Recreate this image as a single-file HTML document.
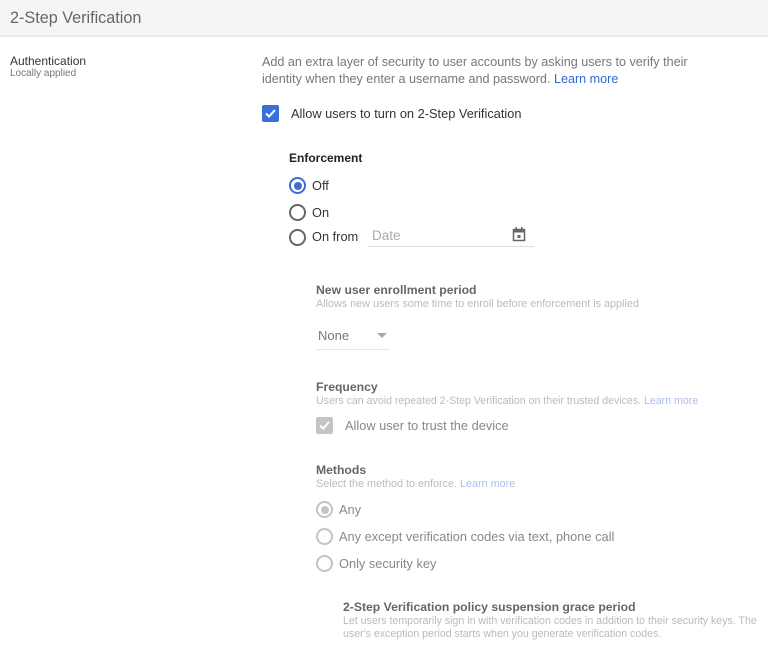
<!DOCTYPE html>
<html><head><meta charset="utf-8"><style>
*{margin:0;padding:0;box-sizing:border-box}
body{width:768px;height:649px;background:#fff;font-family:"Liberation Sans",sans-serif;position:relative;overflow:hidden}
.a{position:absolute;white-space:nowrap}
.hdr{position:absolute;left:0;top:0;width:768px;height:37px;background:#f5f5f5;border-bottom:2px solid #ebebeb}
.rad{position:absolute;width:17px;height:17px;border:2px solid #666;border-radius:50%}
.rad.on{border-color:#3b6fd8}
.rad.on::after{content:"";position:absolute;left:2.5px;top:2.5px;width:8px;height:8px;border-radius:50%;background:#3b6fd8}
.rad.g{border-color:#c4c4c4}
.rad.g.sel::after{content:"";position:absolute;left:2.5px;top:2.5px;width:8px;height:8px;border-radius:50%;background:#c4c4c4}
.b{color:#bbb;font-size:10.8px}
.lk{color:#3367d6}
</style></head><body>
<div class="hdr"></div>
<div class="a" style="left:10px;top:9px;font-size:16.2px;color:#666">2-Step Verification</div>
<div class="a" style="left:10px;top:54px;font-size:12px;color:#333">Authentication</div>
<div class="a" style="left:10px;top:68px;font-size:10px;color:#777">Locally applied</div>
<div class="a" style="left:262px;top:54px;font-size:12.6px;color:#777;line-height:17px">Add an extra layer of security to user accounts by asking users to verify their<br>identity when they enter a username and password. <span class="lk">Learn more</span></div>
<div class="a" style="left:262px;top:105px;width:17px;height:17px;background:#3b6fd8;border-radius:2px">
<svg width="17" height="17" viewBox="0 0 17 17"><path d="M4 8.5l3 3 6-6.5" stroke="#fff" stroke-width="2" fill="none"/></svg></div>
<div class="a" style="left:291px;top:106px;font-size:12.8px;color:#333">Allow users to turn on 2-Step Verification</div>
<div class="a" style="left:289px;top:151px;font-size:12px;font-weight:bold;color:#222">Enforcement</div>
<div class="rad on" style="left:289px;top:177px"></div>
<div class="a" style="left:312px;top:178px;font-size:12.8px;color:#333">Off</div>
<div class="rad" style="left:289px;top:204px"></div>
<div class="a" style="left:312px;top:205px;font-size:12.8px;color:#333">On</div>
<div class="rad" style="left:289px;top:229px"></div>
<div class="a" style="left:312px;top:229px;font-size:12.8px;color:#333">On from</div>
<div class="a" style="left:372px;top:228px;font-size:13.5px;color:#aaa">Date</div>
<div class="a" style="left:368px;top:246px;width:166px;height:1px;background:#ddd"></div>
<svg class="a" style="left:512px;top:227px" width="14" height="15" viewBox="0 0 14 15"><rect x="1.5" y="2.5" width="11" height="11" fill="none" stroke="#666" stroke-width="1.5"/><rect x="1.5" y="2.5" width="11" height="3" fill="#666"/><rect x="3.5" y="0" width="1.5" height="3" fill="#666"/><rect x="9" y="0" width="1.5" height="3" fill="#666"/><rect x="5.5" y="8" width="3" height="3" fill="#666"/></svg>
<div class="a" style="left:316px;top:283px;font-size:12.2px;font-weight:bold;color:#666">New user enrollment period</div>
<div class="a b" style="left:316px;top:298px">Allows new users some time to enroll before enforcement is applied</div>
<div class="a" style="left:318px;top:328px;font-size:13px;color:#777">None</div>
<div class="a" style="left:377px;top:333px;width:0;height:0;border-left:5px solid transparent;border-right:5px solid transparent;border-top:5px solid #aaa"></div>
<div class="a" style="left:316px;top:349px;width:74px;height:1px;background:#e5e5e5"></div>
<div class="a" style="left:316px;top:380px;font-size:12.2px;font-weight:bold;color:#666">Frequency</div>
<div class="a b" style="left:316px;top:395px;font-size:10.6px">Users can avoid repeated 2-Step Verification on their trusted devices. <span style="color:#a9bff0">Learn more</span></div>
<div class="a" style="left:316px;top:417px;width:17px;height:17px;background:#c4c4c4;border-radius:2px">
<svg width="17" height="17" viewBox="0 0 17 17"><path d="M4 8.5l3 3 6-6.5" stroke="#fff" stroke-width="2" fill="none"/></svg></div>
<div class="a" style="left:345px;top:418px;font-size:12.8px;color:#888">Allow user to trust the device</div>
<div class="a" style="left:316px;top:463px;font-size:12.2px;font-weight:bold;color:#666">Methods</div>
<div class="a b" style="left:316px;top:478px">Select the method to enforce. <span style="color:#a9bff0">Learn more</span></div>
<div class="rad g sel" style="left:316px;top:501px"></div>
<div class="a" style="left:339px;top:502px;font-size:12.8px;color:#888">Any</div>
<div class="rad g" style="left:316px;top:528px"></div>
<div class="a" style="left:339px;top:529px;font-size:12.8px;color:#888">Any except verification codes via text, phone call</div>
<div class="rad g" style="left:316px;top:555px"></div>
<div class="a" style="left:339px;top:556px;font-size:12.8px;color:#888">Only security key</div>
<div class="a" style="left:343px;top:600px;font-size:12.2px;font-weight:bold;color:#666">2-Step Verification policy suspension grace period</div>
<div class="a b" style="left:343px;top:615px;line-height:12.5px;font-size:10.6px">Let users temporarily sign in with verification codes in addition to their security keys. The<br>user's exception period starts when you generate verification codes.</div>
</body></html>
